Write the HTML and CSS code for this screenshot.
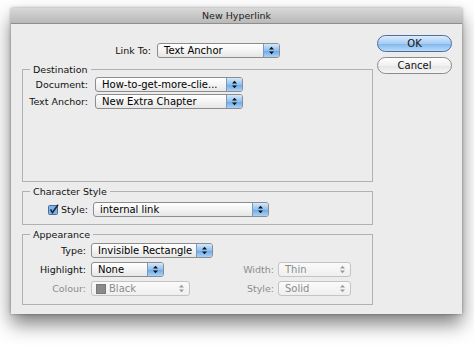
FILE: index.html
```html
<html>
	<head>
		<link rel="stylesheet" href="styles.css">
	</head>
	<body>
		<div class="window">
			<div class="titlebar">New Hyperlink</div>
			<div class="content">
				<div class="main">
					<div class="row link-row">
						<span class="lbl">Link To:</span>
						<div class="popup w-link"><span class="val">Text Anchor</span><span class="step"><svg width="7" height="9" viewBox="0 0 7 9"><path d="M3.5 0.8L6 3.6H1z M1 5.4H6L3.5 8.2z"/></svg></span></div>
					</div>

					<fieldset class="group dest">
						<legend>Destination</legend>
						<div class="rows">
							<div class="row">
								<span class="lbl">Document:</span>
								<div class="popup w-doc"><span class="val">How-to-get-more-clie...</span><span class="step"><svg width="7" height="9" viewBox="0 0 7 9"><path d="M3.5 0.8L6 3.6H1z M1 5.4H6L3.5 8.2z"/></svg></span></div>
							</div>
							<div class="row">
								<span class="lbl">Text Anchor:</span>
								<div class="popup w-doc"><span class="val">New Extra Chapter</span><span class="step"><svg width="7" height="9" viewBox="0 0 7 9"><path d="M3.5 0.8L6 3.6H1z M1 5.4H6L3.5 8.2z"/></svg></span></div>
							</div>
						</div>
					</fieldset>

					<fieldset class="group charstyle">
						<legend>Character Style</legend>
						<div class="rows">
							<div class="row">
								<span class="lbl">
									<svg class="check" width="11" height="11" viewBox="0 0 11 11"><rect x="0.5" y="1.5" width="9" height="9" rx="1" fill="#7fb2e8" stroke="#4a6d9c"/><path d="M2.5 5.5L4.5 8.5L10 0.8" fill="none" stroke="#1b2a40" stroke-width="1.6"/></svg>Style:
								</span>
								<div class="popup w-style"><span class="val">internal link</span><span class="step"><svg width="7" height="9" viewBox="0 0 7 9"><path d="M3.5 0.8L6 3.6H1z M1 5.4H6L3.5 8.2z"/></svg></span></div>
							</div>
						</div>
					</fieldset>

					<fieldset class="group appearance">
						<legend>Appearance</legend>
						<div class="rows two-col">
							<div class="col">
								<div class="row">
									<span class="lbl">Type:</span>
									<div class="popup w-type"><span class="val">Invisible Rectangle</span><span class="step"><svg width="7" height="9" viewBox="0 0 7 9"><path d="M3.5 0.8L6 3.6H1z M1 5.4H6L3.5 8.2z"/></svg></span></div>
								</div>
								<div class="row">
									<span class="lbl">Highlight:</span>
									<div class="popup w-hl"><span class="val">None</span><span class="step"><svg width="7" height="9" viewBox="0 0 7 9"><path d="M3.5 0.8L6 3.6H1z M1 5.4H6L3.5 8.2z"/></svg></span></div>
								</div>
								<div class="row">
									<span class="lbl off">Colour:</span>
									<div class="popup off w-col"><span class="val"><i class="swatch"></i>Black</span><span class="step"><svg width="7" height="9" viewBox="0 0 7 9"><path d="M3.5 0.8L6 3.6H1z M1 5.4H6L3.5 8.2z"/></svg></span></div>
								</div>
							</div>
							<div class="col right">
								<div class="row">
									<span class="lbl off">Width:</span>
									<div class="popup off w-width"><span class="val">Thin</span><span class="step"><svg width="7" height="9" viewBox="0 0 7 9"><path d="M3.5 0.8L6 3.6H1z M1 5.4H6L3.5 8.2z"/></svg></span></div>
								</div>
								<div class="row">
									<span class="lbl off">Style:</span>
									<div class="popup off w-width"><span class="val">Solid</span><span class="step"><svg width="7" height="9" viewBox="0 0 7 9"><path d="M3.5 0.8L6 3.6H1z M1 5.4H6L3.5 8.2z"/></svg></span></div>
								</div>
							</div>
						</div>
					</fieldset>
				</div>
				<div class="side">
					<button class="btn ok">OK</button>
					<button class="btn">Cancel</button>
				</div>
			</div>
		</div>
	</body>
</html>
```

FILE: styles.css
```css
body{
	margin:0;
	background:#fff;
	font-family:"DejaVu Sans", sans-serif;
	font-size:9.5px;
	color:#111;
}
.window{
	margin:8px 0 0 11px;
	width:451px;
	height:306px;
	background:#ececec;
	box-shadow:0 10px 18px rgba(0,0,0,0.5), 0 0 3px rgba(0,0,0,0.35);
	display:flex;
	flex-direction:column;
}
.titlebar{
	height:16px;
	line-height:16px;
	text-align:center;
	background:linear-gradient(#d8d8d8, #b9b9b9);
	border-bottom:1px solid #8e8e8e;
	box-sizing:border-box;
	color:#222;
}
.content{
	display:flex;
	flex:1;
}
.main{
	width:351px;
	padding:19px 0 0 11px;
}
.side{
	display:flex;
	flex-direction:column;
	gap:5px;
	padding:11px 0 0 4px;
}

.row{
	display:flex;
	align-items:center;
	height:15px;
}
.lbl{
	text-align:right;
	white-space:nowrap;
	display:flex;
	align-items:center;
	justify-content:flex-end;
}
.lbl.off{
	color:#8c8c8c;
}
.link-row .lbl{
	width:129px;
	margin-right:6px;
}

/* popup buttons */
.popup{
	box-sizing:border-box;
	height:15px;
	border:1px solid #8d8d8d;
	border-radius:3px;
	background:linear-gradient(#ffffff, #f4f4f4 50%, #e6e6e6);
	display:flex;
	align-items:center;
	overflow:hidden;
	font-size:10px;
	color:#000;
}
.popup .val{
	flex:1;
	padding-left:6px;
	white-space:nowrap;
	display:flex;
	align-items:center;
}
.popup .step{
	width:15px;
	height:100%;
	border-left:1px solid #7e98b8;
	background:linear-gradient(#d6e8fa, #8ec0f0 50%, #6aa6e6 51%, #a9d2f7);
	display:flex;
	align-items:center;
	justify-content:center;
}
.popup .step svg{
	fill:#111;
}
.popup.off{
	border-color:#c4c4c4;
	color:#8c8c8c;
	background:linear-gradient(#fafafa, #efefef);
}
.popup.off .step{
	background:none;
	border-left:none;
}
.popup.off .step svg{
	fill:#9a9a9a;
}
.swatch{
	display:inline-block;
	width:8px;
	height:8px;
	background:#8a8a8a;
	border:1px solid #777;
	margin-right:3px;
	margin-left:-2px;
}
.w-link{ width:123px; }
.w-doc{ width:148px; }
.w-style{ width:176px; }
.w-type{ width:122px; }
.w-hl{ width:73px; }
.w-col{ width:99px; }
.w-width{ width:73px; }

/* group boxes */
.group{
	margin:0;
	padding:0;
	border:1px solid #b1b1b1;
	min-width:0;
}
.group legend{
	margin-left:7px;
	padding:0 3px;
	line-height:13px;
}
.rows{
	display:flex;
	flex-direction:column;
	gap:2px;
}
.dest{
	margin-top:5px;
}
.dest .rows{
	height:104px;
	padding-top:1px;
}
.dest .lbl{
	width:65px;
	margin-right:7px;
}
.charstyle{
	margin-top:3px;
}
.charstyle .rows{
	padding:4px 0 7px;
}
.charstyle .lbl{
	width:65px;
	margin-right:5px;
}
.check{
	margin-right:2px;
}
.appearance{
	margin-top:3px;
}
.two-col{
	flex-direction:row;
	padding:2px 0 8px;
}
.col{
	display:flex;
	flex-direction:column;
	gap:4px;
}
.appearance .lbl{
	width:63px;
	margin-right:5px;
}
.col.right{
	margin-left:8px;
	padding-top:19px;
}
.col.right .lbl{
	width:51px;
	margin-right:4px;
}

/* push buttons */
.btn{
	width:75px;
	height:17px;
	border-radius:9px;
	border:1px solid #8a8a8a;
	background:linear-gradient(#ffffff, #f0f0f0 50%, #e4e4e4 51%, #f6f6f6);
	font-family:"DejaVu Sans", sans-serif;
	font-size:10px;
	color:#111;
	padding:0;
	cursor:pointer;
}
.btn.ok{
	border-color:#4f6f99;
	background:linear-gradient(#dcecfc, #a6cdf4 50%, #7fb5ec 51%, #b8dcfa);
}
```
